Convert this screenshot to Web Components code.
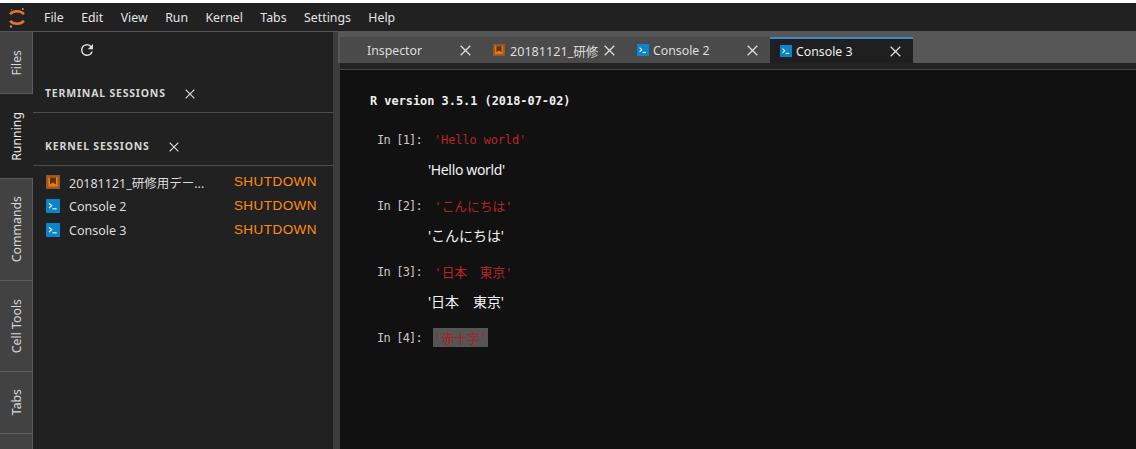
<!DOCTYPE html>
<html lang="ja">
<head>
<meta charset="utf-8">
<title>JupyterLab</title>
<style>
  html, body { margin: 0; height: 100%; background: #fff; overflow: hidden; }
  body {
    font-family: "Noto Sans", "Noto Sans CJK JP", sans-serif;
    color: #ddd;
    padding-top: 3px;
    box-sizing: border-box;
    display: flex;
    flex-direction: column;
  }
  jl-main { flex: 1; min-height: 0; }
</style>
</head>
<body>
  <jl-menubar></jl-menubar>
  <jl-main>
    <jl-sidetabs></jl-sidetabs>
    <jl-running></jl-running>
    <jl-dock></jl-dock>
  </jl-main>

<script>
const CLOSE = (size, color) => `<svg width="${size}" height="${size}" viewBox="0 0 11 11" fill="none" stroke="${color}" stroke-width="1.3"><path d="M.7.7l9.6 9.6M10.3.7L.7 10.3"/></svg>`;

class JlIcon extends HTMLElement {
  connectedCallback() {
    this.attachShadow({ mode: 'open' });
    const kind = this.getAttribute('kind');
    const art = kind === 'notebook'
      ? `<rect x=".7" y=".7" width="12.6" height="12.6" fill="#a95a1c" stroke="#8a5a34" stroke-width="1.4"/><rect x="2.5" y="2.5" width="9" height="9" fill="#f57c00"/><path d="M4 2.5h6v7L7 7.6 4 9.5z" fill="#5a3212"/>`
      : `<rect width="14" height="14" fill="#0a85c9"/><path d="M3 4.3L5.6 6.7 3 9.1" fill="none" stroke="#fff" stroke-width="1.2"/><path d="M6.5 9.8h4.2" stroke="#fff" stroke-width="1.1"/>`;
    this.shadowRoot.innerHTML = `
      <style>
        :host { display: block; width: 14px; height: 14px; flex: none; }
        svg { display: block; }
      </style>
      <svg width="14" height="14" viewBox="0 0 14 14">${art}</svg>
    `;
  }
}
customElements.define('jl-icon', JlIcon);

class JlMenubar extends HTMLElement {
  connectedCallback() {
    this.attachShadow({ mode: 'open' });
    const items = ['File', 'Edit', 'View', 'Run', 'Kernel', 'Tabs', 'Settings', 'Help'];
    this.shadowRoot.innerHTML = `
      <style>
        :host {
          display: flex;
          align-items: center;
          height: 28px;
          background: #212121;
          border-bottom: 1px solid #565656;
          flex: none;
          font-size: 12.3px;
          color: #e4e4e4;
        }
        .logo { width: 35.3px; flex: none; padding-left: 9px; box-sizing: border-box; }
        .logo svg { display: block; }
        span { padding: 0 8.75px; }
      </style>
      <div class="logo">
        <svg width="16" height="21" viewBox="0 0 16 21" fill="none">
          <path d="M1.2 7.2C4 3.2 12 3.200 14.800 7.200" stroke="#ea7420" stroke-width="2.6"/>
          <path d="M1.2 13.800C4 17.800 12 17.800 14.800 13.800" stroke="#ea7420" stroke-width="2.6"/>
          <circle cx="13.800" cy="2" r="1" fill="#9a9a9a"/>
          <circle cx="2" cy="19.500" r="1.200" fill="#9a9a9a"/>
          <circle cx="2.500" cy="2.800" r=".8" fill="#808080"/>
        </svg>
      </div>
      ${items.map(i => `<span>${i}</span>`).join('')}
    `;
  }
}
customElements.define('jl-menubar', JlMenubar);

class JlMain extends HTMLElement {
  connectedCallback() {
    this.attachShadow({ mode: 'open' });
    this.shadowRoot.innerHTML = `
      <style>
        :host { display: flex; background: #212121; }
      </style>
      <slot></slot>
    `;
  }
}
customElements.define('jl-main', JlMain);

class JlSidetabs extends HTMLElement {
  connectedCallback() {
    this.attachShadow({ mode: 'open' });
    const tabs = [['Files', 62], ['Running', 85, true], ['Commands', 102], ['Cell Tools', 91], ['Tabs', 62]];
    this.shadowRoot.innerHTML = `
      <style>
        :host {
          display: flex;
          flex-direction: column;
          width: 32px;
          flex: none;
          background: #424242;
          border-right: 1px solid #5c5c5c;
          font-size: 12.3px;
          color: #d8d8d8;
        }
        div {
          box-sizing: border-box;
          border-bottom: 1px solid #5c5c5c;
          display: flex;
          align-items: center;
          justify-content: center;
        }
        div.on { background: #212121; color: #eee; margin-right: -1px; position: relative; }
        span { writing-mode: vertical-rl; transform: rotate(180deg); }
      </style>
      ${tabs.map(([t, h, on]) => `<div class="${on ? 'on' : ''}" style="height:${h}px"><span>${t}</span></div>`).join('')}
    `;
  }
}
customElements.define('jl-sidetabs', JlSidetabs);

class JlSessionRow extends HTMLElement {
  connectedCallback() {
    this.attachShadow({ mode: 'open' });
    this.shadowRoot.innerHTML = `
      <style>
        :host {
          display: flex;
          align-items: center;
          height: 24px;
          padding: 0 16px 0 13px;
          font-size: 12.5px;
          color: #dcdcdc;
        }
        .name { margin-left: 9px; white-space: nowrap; }
        .stop { margin-left: auto; margin-top: -2px; color: #ff8c1a; font-size: 13.5px; letter-spacing: .45px; font-family: "Liberation Sans", sans-serif; }
      </style>
      <slot name="icon"></slot>
      <span class="name"><slot></slot></span>
      <span class="stop">SHUTDOWN</span>
    `;
  }
}
customElements.define('jl-session-row', JlSessionRow);

class JlSectionHead extends HTMLElement {
  connectedCallback() {
    this.attachShadow({ mode: 'open' });
    this.shadowRoot.innerHTML = `
      <style>
        :host {
          display: flex;
          align-items: center;
          gap: 19px;
          box-sizing: border-box;
          padding: 0 0 12px 12px;
          border-bottom: 1px solid #4e4e4e;
          font-size: 10.5px;
          font-weight: 700;
          letter-spacing: .8px;
          color: #d6d6d6;
        }
        svg { display: block; margin-top: 2px; }
      </style>
      <span><slot></slot></span>
      ${CLOSE(10, '#ddd')}
    `;
  }
}
customElements.define('jl-section-head', JlSectionHead);

class JlRunning extends HTMLElement {
  connectedCallback() {
    this.attachShadow({ mode: 'open' });
    this.shadowRoot.innerHTML = `
      <style>
        :host {
          display: flex;
          flex-direction: column;
          width: 300px;
          flex: none;
          background: #212121;
        }
        .tools { height: 37px; padding-left: 45px; display: flex; align-items: center; }
        .tools svg { margin-top: -1px; }
        jl-section-head { margin-top: 17px; }
        jl-section-head + jl-section-head { margin-top: 26px; }
        .rows { padding-top: 4px; }
      </style>
      <div class="tools">
        <svg width="18" height="18" viewBox="0 0 24 24" fill="#ddd"><path d="M17.65 6.35A7.95 7.95 0 0 0 12 4a8 8 0 1 0 7.73 10h-2.08A6 6 0 1 1 12 6c1.66 0 3.14.69 4.22 1.78L13 11h7V4l-2.35 2.35z"/></svg>
      </div>
      <jl-section-head>TERMINAL SESSIONS</jl-section-head>
      <jl-section-head>KERNEL SESSIONS</jl-section-head>
      <div class="rows">
        <jl-session-row><jl-icon slot="icon" kind="notebook"></jl-icon>20181121_研修用デー...</jl-session-row>
        <jl-session-row><jl-icon slot="icon" kind="console"></jl-icon>Console 2</jl-session-row>
        <jl-session-row><jl-icon slot="icon" kind="console"></jl-icon>Console 3</jl-session-row>
      </div>
    `;
  }
}
customElements.define('jl-running', JlRunning);

class JlTab extends HTMLElement {
  connectedCallback() {
    this.attachShadow({ mode: 'open' });
    this.shadowRoot.innerHTML = `
      <style>
        :host {
          display: flex;
          align-items: center;
          box-sizing: border-box;
          width: var(--w, 143px);
          height: 26px;
          padding: 0 12px 0 9px;
          background: #4a4a4a;
          color: #dedede;
          font-size: 12.3px;
        }
        :host([active]) {
          background: #1f1f1f;
          border-top: 2px solid #3d8ccb;
          color: #eee;
        }
        :host([bare]) .label { margin-left: 18px; }
        .label { margin-left: var(--gap, 3px); flex: 1; min-width: 0; white-space: nowrap; }
        svg { display: block; flex: none; margin-left: 5px; }
      </style>
      <slot name="icon"></slot>
      <span class="label"><slot></slot></span>
      ${CLOSE(11, '#ddd')}
    `;
  }
}
customElements.define('jl-tab', JlTab);

class JlCell extends HTMLElement {
  connectedCallback() {
    this.attachShadow({ mode: 'open' });
    const n = this.getAttribute('n');
    const out = this.getAttribute('out');
    this.shadowRoot.innerHTML = `
      <style>
        :host { display: block; padding-left: 35px; }
        .in {
          display: flex;
          height: 17px;
          align-items: center;
          font: 12px "DejaVu Sans Mono", "Noto Sans CJK JP", monospace;
          color: #c9c9c9;
        }
        .prompt { width: 56px; flex: none; letter-spacing: -.8px; }
        .code { color: #b82525; padding: 0 1px; letter-spacing: -.14px; }
        :host([cjk]) .code { font-size: 12.7px; letter-spacing: 0; }
        :host([selected]) .code { background: #555; color: #b02020; }
        .out {
          margin: 12px 0 0 51px;
          height: 19px;
          line-height: 19px;
          font-size: 14px;
          letter-spacing: -.35px;
          color: #f2f2f2;
        }
        :host([cjk]) .out { letter-spacing: -.05px; }
      </style>
      <div class="in"><span class="prompt">In [${n}]:</span><span class="code"><slot></slot></span></div>
      ${out ? `<div class="out">${out}</div>` : ''}
    `;
  }
}
customElements.define('jl-cell', JlCell);

class JlConsole extends HTMLElement {
  connectedCallback() {
    this.attachShadow({ mode: 'open' });
    this.shadowRoot.innerHTML = `
      <style>
        :host {
          display: flex;
          flex-direction: column;
          flex: 1;
          min-height: 0;
          background: #111;
          border-top: 1px solid #444;
          padding: 23px 0 0 30px;
          font-family: "Noto Sans", "Noto Sans CJK JP", sans-serif;
        }
        .banner {
          font: 700 11.9px "DejaVu Sans Mono", monospace;
          color: #eee;
          height: 16px;
          line-height: 16px;
          margin-bottom: 22px;
        }
        .cells { display: flex; flex-direction: column; gap: 18px; margin-left: -28px; }
      </style>
      <div class="banner">R version 3.5.1 (2018-07-02)</div>
      <div class="cells"><slot></slot></div>
    `;
  }
}
customElements.define('jl-console', JlConsole);

class JlDock extends HTMLElement {
  connectedCallback() {
    this.attachShadow({ mode: 'open' });
    this.shadowRoot.innerHTML = `
      <style>
        :host {
          display: flex;
          flex-direction: column;
          flex: 1;
          min-width: 0;
          background: #3d3d3d;
          padding-left: 7px;
        }
        .bar { background: #575757; padding-top: 5px; margin-left: -2px; padding-left: 2px; display: flex; flex: none; }
        .gap { height: 6px; background: #222; flex: none; }
      </style>
      <div class="bar">
        <jl-tab bare>Inspector</jl-tab>
        <jl-tab style="--w:144px;--gap:4px;font-size:12.6px"><jl-icon slot="icon" kind="notebook" style="transform:scale(.86)"></jl-icon>20181121_研修</jl-tab>
        <jl-tab><jl-icon slot="icon" kind="console" style="transform:scale(.86)"></jl-icon>Console 2</jl-tab>
        <jl-tab active><jl-icon slot="icon" kind="console" style="transform:scale(.86)"></jl-icon>Console 3</jl-tab>
      </div>
      <div class="gap"></div>
      <jl-console>
        <jl-cell n="1" out="'Hello world'">'Hello world'</jl-cell>
        <jl-cell n="2" cjk out="'こんにちは'">'こんにちは'</jl-cell>
        <jl-cell n="3" cjk out="'日本　東京'">'日本　東京'</jl-cell>
        <jl-cell n="4" cjk selected>'赤十字'</jl-cell>
      </jl-console>
    `;
  }
}
customElements.define('jl-dock', JlDock);
</script>
</body>
</html>
